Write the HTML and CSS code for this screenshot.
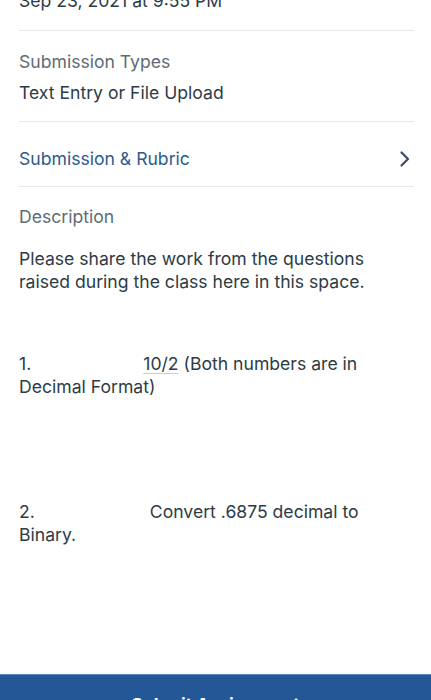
FILE: index.html
```html
<!DOCTYPE html>
<html>
<head>
<meta charset="utf-8">
<link rel="stylesheet" href="styles.css">
</head>
<body>
<main class="page">
  <div class="row date-row">
    <div class="value">Sep 23, 2021 at 9:55 PM</div>
  </div>
  <div class="row types-row">
    <div class="label">Submission Types</div>
    <div class="value types-value">Text Entry or File Upload</div>
  </div>
  <div class="row link-row">
    <span class="link">Submission &amp; Rubric</span>
    <svg class="chevron" width="14" height="18" viewBox="0 0 14 18"><path d="M3.5 2.5 L10 9 L3.5 15.5" fill="none" stroke="#3a4a68" stroke-width="2.2" stroke-linecap="round" stroke-linejoin="round"/></svg>
  </div>
  <section class="desc">
    <div class="label">Description</div>
    <p class="para first">Please share the work from the questions raised during the class here in this space.</p>
    <p class="para q1">1.<span class="gap g1"></span><span class="ul">10/2</span> (Both numbers are in Decimal Format)</p>
    <p class="para q2">2.<span class="gap g2"></span>Convert .6875 decimal to Binary.</p>
  </section>
</main>
<footer class="submit">Submit Assignment</footer>
</body>
</html>
```
FILE: styles.css
```css
html, body {
  margin: 0;
  padding: 0;
  background: #ffffff;
  overflow: hidden;
}
body {
  font-family: Inter, "Liberation Sans", sans-serif;
  font-size: 17.6px;
  line-height: 23px;
  color: #2d3b45;
  width: 431px;
  height: 700px;
  position: relative;
}
.page {
  padding: 0 17px 0 19px;
  margin-top: -11px;
}
.row {
  border-bottom: 1px solid #e6e9eb;
}
.date-row {
  padding-bottom: 18px;
}
.types-row {
  padding-top: 19px;
  padding-bottom: 17px;
}
.types-value {
  margin-top: 8px;
}
.label {
  color: #5f6b75;
}
.link-row {
  display: flex;
  align-items: center;
  justify-content: space-between;
  padding-top: 25px;
  padding-bottom: 16px;
}
.link {
  color: #2d5a8c;
}
.chevron {
  margin-right: 2px;
}
.desc {
  padding-top: 18px;
}
.para {
  margin: 0;
}
.first {
  margin-top: 19px;
  padding-right: 40px;
}
.q1 {
  margin-top: 59px;
}
.q2 {
  margin-top: 102px;
}
.gap {
  display: inline-block;
}
.g1 { width: 112px; }
.g2 { width: 115px; }
.ul {
  text-decoration: underline;
  text-decoration-color: #c9ced2;
  text-underline-offset: 3px;
}
.submit {
  position: absolute;
  left: 0;
  right: 0;
  top: 674px;
  height: 60px;
  background: #235796;
  border-top: 1px solid #5b86b8;
  color: #ffffff;
  font-weight: 700;
  text-align: center;
  padding-top: 18px;
  box-sizing: border-box;
}
```
